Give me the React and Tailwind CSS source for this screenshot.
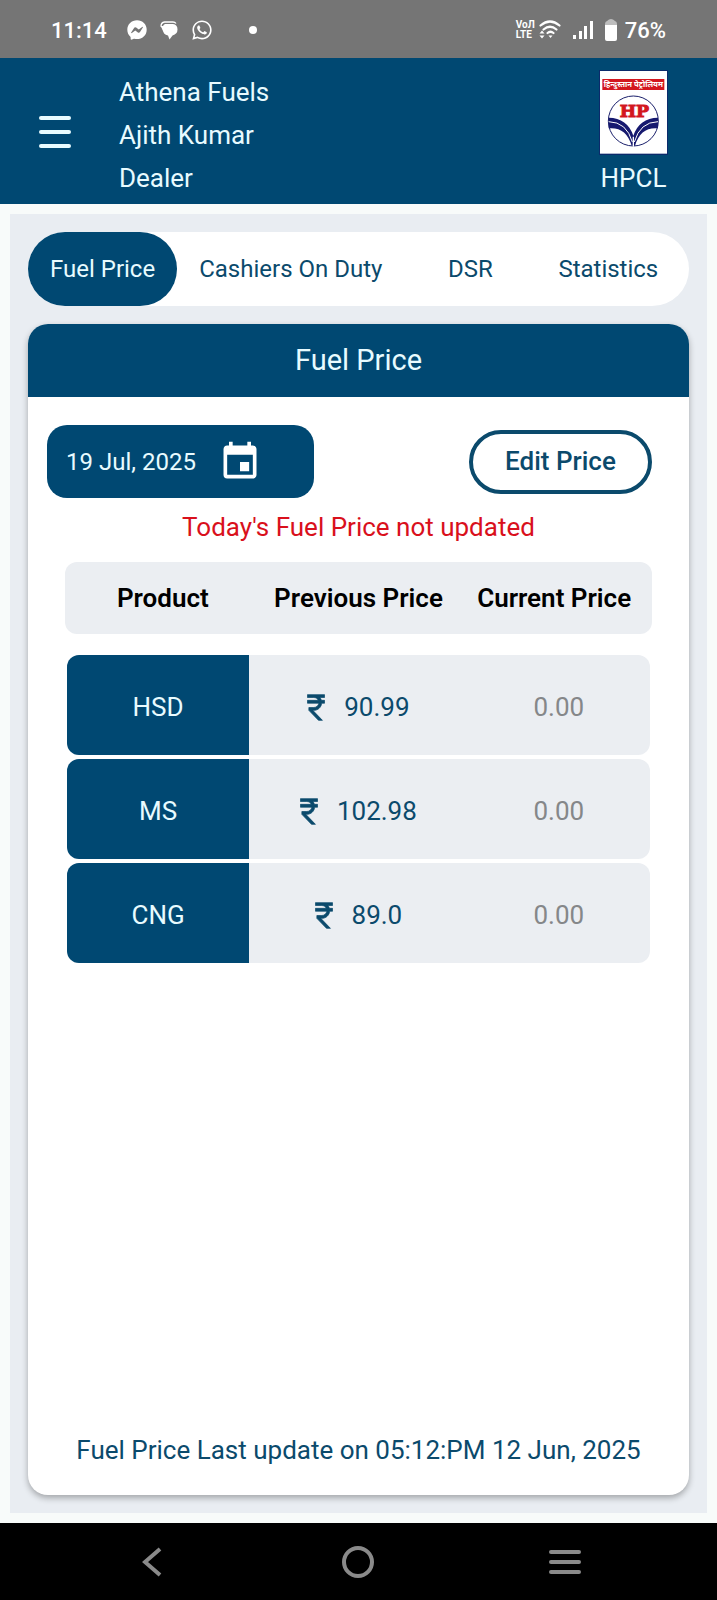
import { FaFacebookMessenger, FaWhatsapp } from 'react-icons/fa';
import { MdEvent } from 'react-icons/md';

const tabs = ['Fuel Price', 'Cashiers On Duty', 'DSR', 'Statistics'];

const prices = [
  { product: 'HSD', previous: '90.99' },
  { product: 'MS', previous: '102.98' },
  { product: 'CNG', previous: '89.0' },
];

const ChatIcon = () => (
  <svg width="18" height="19" viewBox="0 0 18 19" fill="#fff" aria-hidden="true">
    <path d="M5 3H13Q17.500 3.500 17.500 8.500Q17.500 13 12.500 14.500L9.500 18.500L8 14.500Q3 13.500 2.500 8Q2.500 4 5 3Z" />
    <path d="M1 5.500Q1 1.500 4.500 1H13Q15 1 16 2.500" fill="none" stroke="#fff" strokeWidth="1.300" />
    <path d="M0.500 5L3 9.500V5Z" />
  </svg>
);

const WifiIcon = () => (
  <svg width="22" height="20" viewBox="0 0 22 20" fill="none" stroke="#fff" strokeWidth="2.200" strokeLinecap="round" aria-hidden="true">
    <path d="M1.500 5.500Q11 -2.500 20.500 5.500" />
    <path d="M4.500 9.500Q11 4 17.500 9.500" />
    <path d="M8.500 13Q11.500 10.500 14.500 13" />
    <path d="M9.500 15.500H13.500L11.500 18Z" fill="#fff" stroke="none" />
    <path d="M0.500 13.500L3 10.500L5.500 13.500ZM0.500 15.500L3 18.500L5.500 15.500Z" fill="#fff" stroke="none" />
  </svg>
);

const SignalIcon = () => (
  <svg width="20" height="20" viewBox="0 0 20 20" fill="#fff" aria-hidden="true">
    <rect x="0" y="15" width="3" height="4" />
    <rect x="6" y="11" width="3" height="8" />
    <rect x="11" y="6" width="3" height="13" />
    <rect x="17" y="1" width="3" height="18" />
  </svg>
);

const BatteryIcon = () => (
  <svg width="12" height="22" viewBox="0 0 12 22" aria-hidden="true">
    <path d="M2 2Q6 -2 10 2Q12 2.500 12 5V7H0V5Q0 2.500 2 2Z" fill="#bdbdbd" />
    <path d="M0 6H12V20Q12 22 10 22H2Q0 22 0 20Z" fill="#fff" />
  </svg>
);

const RupeeIcon = () => (
  <svg width="18" height="27" viewBox="5.700 2.700 12.600 18.600" fill="currentColor" stroke="currentColor" strokeWidth="0.500" aria-hidden="true">
    <path d="M13.660 7c-.56-1.180-1.760-2-3.160-2H6V3h12v2h-3.260c.48.58.84 1.260 1.050 2H18v2h-2.020c-.25 2.800-2.610 5-5.480 5h-.73l6.730 7h-2.770L7 14v-2h3.500c1.760 0 3.220-1.300 3.460-3H6V7h7.660z" />
  </svg>
);

const HpLogo = () => (
  <svg width="69" height="85" viewBox="26 22 207 255" role="img" aria-label="HP logo">
    <rect x="26" y="22" width="207" height="255" fill="#0b2a6b" />
    <rect x="29" y="25" width="201" height="248" fill="#fff" />
    <rect x="36" y="49" width="186" height="33" fill="#d3161f" />
    <text x="129" y="73" textAnchor="middle" fill="#fff" fontSize="23" fontWeight="700" fontFamily="Noto Sans Devanagari, Noto Sans, sans-serif">
      हिन्दुस्तान पेट्रोलियम
    </text>
    <circle cx="129" cy="175" r="75" fill="#fff" stroke="#1a1f6b" strokeWidth="3" />
    <path d="M55 165Q111 166 129 219Q147 166 203 165L203 197Q151 192 134 249H124Q107 192 55 197Z" fill="#16196f" />
    <path d="M55 177Q109 178 126 238M203 177Q149 178 132 238" fill="none" stroke="#fff" strokeWidth="3" />
    <path d="M129 222V252" stroke="#fff" strokeWidth="4" />
    <text x="132" y="163" textAnchor="middle" fill="#d3161f" stroke="#d3161f" strokeWidth="3" fontSize="52" fontWeight="700" fontFamily="DejaVu Serif, serif">
      HP
    </text>
  </svg>
);

const StatusBar = () => (
  <div className="flex h-[58px] items-center justify-between bg-[#757575] pl-[51px] pr-[51px] pt-[2px] text-[22px] font-medium text-white">
    <div className="flex items-center">
      <span>11:14</span>
      <div className="ml-5 flex items-center gap-[13px]">
        <FaFacebookMessenger size={20} />
        <ChatIcon />
        <FaWhatsapp size={22} />
      </div>
      <span className="ml-9 size-2 rounded-full bg-white" />
    </div>
    <div className="flex items-center">
      <div className="text-[10px] font-bold leading-[10px]">
        <div>VoЛ</div>
        <div>LTE</div>
      </div>
      <div className="ml-1 flex items-center gap-3">
        <WifiIcon />
        <SignalIcon />
        <BatteryIcon />
      </div>
      <span className="ml-2">76%</span>
    </div>
  </div>
);

const Header = () => (
  <header className="flex items-center bg-[#004872] pb-[3px] pl-[39px] pr-[49px] pt-3 text-[26px] text-[#e8fbff]">
    <button type="button" aria-label="Open menu" className="mb-2 flex w-8 flex-col gap-[10px]">
      <span className="h-1 w-full rounded-full bg-[#e8fbff]" />
      <span className="h-1 w-full rounded-full bg-[#e8fbff]" />
      <span className="h-1 w-full rounded-full bg-[#e8fbff]" />
    </button>
    <div className="ml-12 flex-1 leading-[43px]">
      <p>Athena Fuels</p>
      <p>Ajith Kumar</p>
      <p>Dealer</p>
    </div>
    <div className="flex flex-col items-center leading-[46px]">
      <HpLogo />
      <p>HPCL</p>
    </div>
  </header>
);

const Tabs = () => (
  <nav className="flex h-[74px] rounded-full bg-white text-2xl text-[#0b4a6c]">
    {tabs.map((tab, i) => (
      <button
        key={tab}
        type="button"
        className={`min-w-[132px] whitespace-nowrap rounded-full px-[22px] ${i === 0 ? 'bg-[#004872] text-[#e8fbff]' : ''}`}
      >
        {tab}
      </button>
    ))}
  </nav>
);

const PriceTable = () => (
  <table className="mt-[14px] block text-[26px]">
    <thead className="block">
      <tr className="grid h-[72px] grid-cols-3 items-center rounded-xl bg-[#ebeef2] text-black">
        <th className="whitespace-nowrap font-semibold">Product</th>
        <th className="whitespace-nowrap font-semibold">Previous Price</th>
        <th className="whitespace-nowrap font-semibold">Current Price</th>
      </tr>
    </thead>
    <tbody className="mx-[2px] mt-[21px] flex flex-col gap-1">
      {prices.map(({ product, previous }) => (
        <tr key={product} className="grid h-[100px] grid-cols-[10fr_11fr_11fr] overflow-hidden rounded-xl bg-[#ebeef2]">
          <td className="flex items-center justify-center bg-[#004872] pt-1 text-[#e8fbff]">{product}</td>
          <td className="flex items-center justify-center gap-[19px] pl-[18px] pt-1 text-[#0b4a6c]">
            <RupeeIcon />
            {previous}
          </td>
          <td className="flex items-center pl-[18px] pt-1">
            <input
              type="text"
              placeholder="0.00"
              aria-label={`Current price of ${product}`}
              className="w-full bg-transparent text-center placeholder:text-[#858789]"
            />
          </td>
        </tr>
      ))}
    </tbody>
  </table>
);

const FuelPriceCard = () => (
  <section className="mt-[18px] flex flex-1 flex-col overflow-hidden rounded-[20px] bg-white shadow-[0_3px_6px_rgba(0,0,0,0.3)]">
    <h1 className="bg-[#004872] text-center text-[29px] leading-[73px] text-[#e8fbff]">Fuel Price</h1>
    <div className="flex flex-1 flex-col px-[37px] pt-7">
      <div className="-ml-[18px] flex items-center justify-between">
        <button type="button" className="flex h-[73px] w-[267px] items-center gap-[22px] rounded-[20px] bg-[#004872] pl-[19px] text-2xl text-[#e8fbff]">
          19 Jul, 2025
          <MdEvent size={44} className="text-white" />
        </button>
        <button type="button" className="h-16 w-[183px] rounded-full border-4 border-[#0b4a6c] text-[26px] font-medium text-[#0b4a6c]">
          Edit Price
        </button>
      </div>
      <p className="mt-2 text-center text-[26px] leading-[42px] text-[#d9101c]">Today's Fuel Price not updated</p>
      <PriceTable />
      <p className="mt-auto whitespace-nowrap pb-6 text-center text-[26px] leading-[42px] text-[#0b4a6c]">
        Fuel Price Last update on 05:12:PM 12 Jun, 2025
      </p>
    </div>
  </section>
);

const NavBar = () => (
  <div className="grid h-[77px] grid-cols-3 items-center justify-items-center bg-black px-[49px]">
    <button type="button" aria-label="Back">
      <svg width="20" height="30" viewBox="0 0 20 30" fill="none" stroke="#8a8a8a" strokeWidth="4">
        <path d="M18 2L3 15L18 28" />
      </svg>
    </button>
    <button type="button" aria-label="Home" className="size-8 rounded-full border-4 border-[#8a8a8a]" />
    <button type="button" aria-label="Recent apps" className="flex w-8 flex-col gap-[6px]">
      <span className="h-1 w-full rounded-xs bg-[#8a8a8a]" />
      <span className="h-1 w-full rounded-xs bg-[#8a8a8a]" />
      <span className="h-1 w-full rounded-xs bg-[#8a8a8a]" />
    </button>
  </div>
);

const App = () => {
  return (
    <div className="flex min-h-screen flex-col bg-[#f8fbfa] font-['Roboto',sans-serif]">
      <StatusBar />
      <Header />
      <main className="m-[10px] flex flex-1 flex-col bg-[#e9edf2] p-[18px]">
        <Tabs />
        <FuelPriceCard />
      </main>
      <NavBar />
    </div>
  );
};

export default App;
